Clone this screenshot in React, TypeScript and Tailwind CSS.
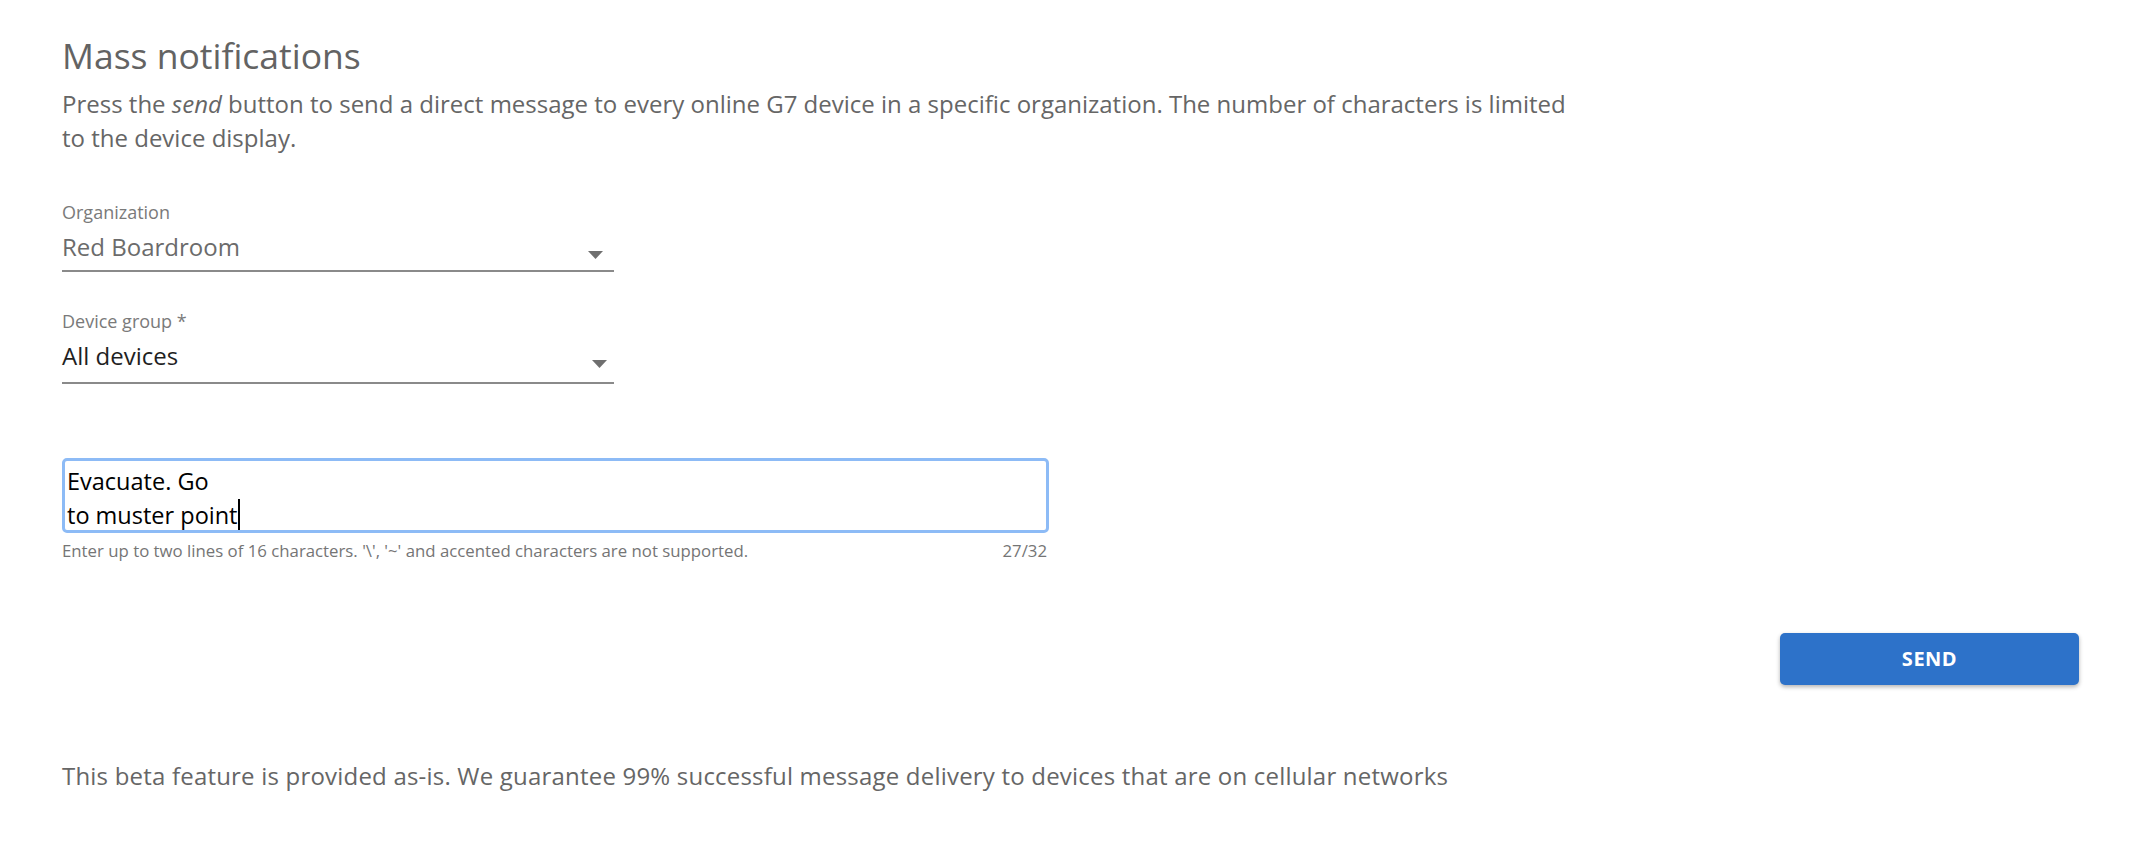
import React from 'react';

const SelectField: React.FC<{
  label: string;
  value: string;
  muted?: boolean;
  arrowRight: string;
  padBottom: string;
}> = ({ label, value, muted, arrowRight, padBottom }) => (
  <div className="w-[552px]">
    <div className="text-[18px] leading-[22px] text-[#7a7a7a] mb-[8px]">{label}</div>
    <div className={`relative border-b-2 border-[#8a8a8a] ${padBottom}`}>
      <div className={`text-[24px] leading-[32px] ${muted ? 'text-[#6b6b6b]' : 'text-[#1f1f1f]'}`}>
        {value}
      </div>
      <svg
        className={`absolute top-[20px] ${arrowRight}`}
        width="15"
        height="8"
        viewBox="0 0 15 8"
      >
        <path d="M0 0 H15 L7.5 8 Z" fill="#6f6f6f" />
      </svg>
    </div>
  </div>
);

const App: React.FC = () => {
  return (
    <div
      className="min-h-[846px] bg-white pl-[62px] pr-[71px] pt-[35px]"
      style={{ fontFamily: '"Open Sans", "Liberation Sans", sans-serif' }}
    >
      <h1 className="text-[35.5px] leading-[40px] font-normal text-[#636363]">Mass notifications</h1>

      <p className="mt-[12px] w-[1520px] text-[24px] leading-[34px] text-[#666666]">
        Press the <em>send</em> button to send a direct message to every online G7 device in a specific
        organization. The number of characters is limited to the device display.
      </p>

      <div className="mt-[46px]">
        <SelectField label="Organization" value="Red Boardroom" muted arrowRight="right-[11px]" padBottom="pb-[7px]" />
      </div>

      <div className="mt-[38px]">
        <SelectField label="Device group *" value="All devices" arrowRight="right-[7px]" padBottom="pb-[10px]" />
      </div>

      {/* Message box */}
      <div className="mt-[74px] w-[987px]">
        <div className="h-[75px] overflow-hidden rounded-[5px] border-[3px] border-[#8dbbf6] pl-[2px] pt-[3px] text-[23.5px] leading-[34px] text-black">
          <div>Evacuate. Go</div>
          <div className="flex items-center">
            <span>to muster point</span>
            <span className="inline-block h-[32px] w-[2px] bg-black" />
          </div>
        </div>
        <div className="mt-[7px] flex justify-between pr-[2px] text-[16.8px] leading-[22px] text-[#757575]">
          <span>Enter up to two lines of 16 characters. '\', '~' and accented characters are not supported.</span>
          <span>27/32</span>
        </div>
      </div>

      <div className="mt-[71px] flex justify-end">
        <button className="h-[52px] w-[299px] rounded-[5px] bg-[#2d72c9] text-[20px] font-bold tracking-[0.5px] text-white shadow-[0_2px_4px_rgba(0,0,0,0.3)]">
          SEND
        </button>
      </div>

      <p className="mt-[76px] text-[24px] leading-[30px] tracking-[0.2px] text-[#666666]">
        This beta feature is provided as-is. We guarantee 99% successful message delivery to devices that are on
        cellular networks
      </p>
    </div>
  );
};

export default App;
